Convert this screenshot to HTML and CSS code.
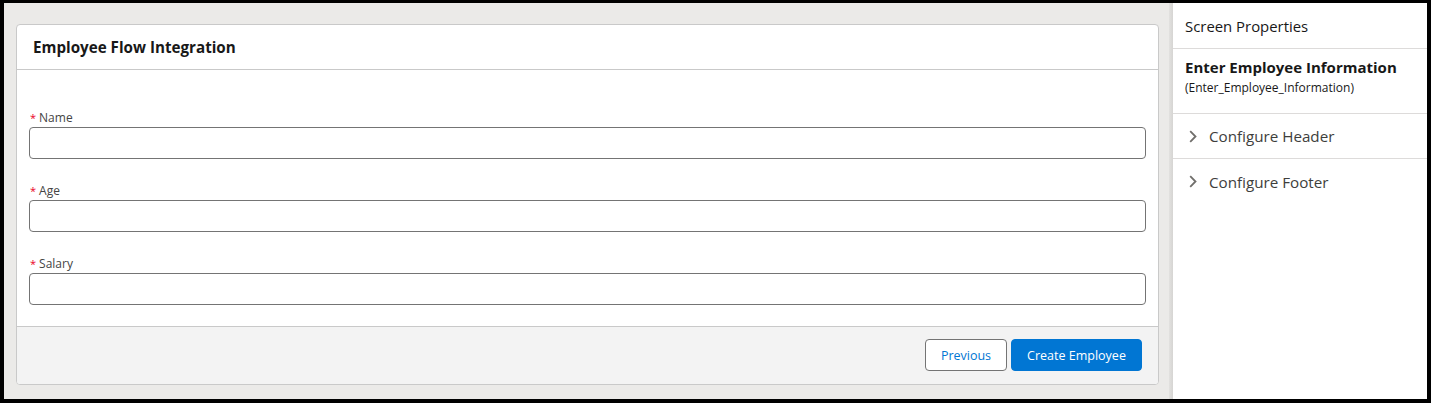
FILE: index.html
```html
<!DOCTYPE html>
<html lang="en">
<head>
    <meta charset="UTF-8">
    <meta name="viewport" content="width=device-width, initial-scale=1.0">
    <title>Flow Builder - Screen</title>
    <link rel="stylesheet" href="styles.css">
</head>
<body>

    <div class="frame">
        <!-- Canvas with the screen preview -->
        <div class="canvas">
            <div class="card">
                <div class="card-header">Employee Flow Integration</div>

                <div class="card-body">
                    <div class="field">
                        <label for="name"><span class="req">*</span>Name</label>
                        <input type="text" id="name">
                    </div>
                    <div class="field">
                        <label for="age"><span class="req">*</span>Age</label>
                        <input type="text" id="age">
                    </div>
                    <div class="field">
                        <label for="salary"><span class="req">*</span>Salary</label>
                        <input type="text" id="salary">
                    </div>
                </div>

                <div class="card-footer">
                    <button class="btn btn-neutral">Previous</button>
                    <button class="btn btn-brand">Create Employee</button>
                </div>
            </div>
        </div>

        <div class="divider"></div>

        <!-- Properties panel -->
        <div class="panel">
            <div class="panel-title">Screen Properties</div>
            <div class="panel-info">
                <div class="info-name">Enter Employee Information</div>
                <div class="info-api">(Enter_Employee_Information)</div>
            </div>
            <div class="panel-row">
                <svg class="chevron" width="8" height="13" viewBox="0 0 8 13">
                    <path d="M1.2 1.2 L6.5 6.5 L1.2 11.8" fill="none" stroke="#706e6b" stroke-width="1.8"/>
                </svg>
                <span>Configure Header</span>
            </div>
            <div class="panel-row">
                <svg class="chevron" width="8" height="13" viewBox="0 0 8 13">
                    <path d="M1.2 1.2 L6.5 6.5 L1.2 11.8" fill="none" stroke="#706e6b" stroke-width="1.8"/>
                </svg>
                <span>Configure Footer</span>
            </div>
        </div>
    </div>

</body>
</html>
```

FILE: styles.css
```css
/* Global Styles */
* {
    box-sizing: border-box;
}

body {
    margin: 0;
    padding: 0;
    background: #fff;
    font-family: "Segoe UI", "Open Sans", "Noto Sans", sans-serif;
    color: #181818;
}

/* Outer frame */
.frame {
    display: flex;
    height: 403px;
    border-style: solid;
    border-color: #000;
    border-width: 3px 4px 4px 4px;
}

/* Canvas */
.canvas {
    flex: 1;
    background: #ebeae8;
    padding: 21px 10px 14px 12px;
}

.divider {
    width: 4px;
    background: linear-gradient(to right, #e2e1df, #d6d5d3);
}

/* Screen card */
.card {
    display: flex;
    flex-direction: column;
    height: 100%;
    background: #fff;
    border: 1px solid #c9c9c9;
    border-radius: 4px;
    overflow: hidden;
}

.card-header {
    height: 45px;
    padding: 0 16px;
    display: flex;
    align-items: center;
    font-size: 15.2px;
    font-weight: bold;
    border-bottom: 1px solid #c9c9c9;
}

.card-body {
    flex: 1;
    min-height: 0;
    padding: 39px 12px 0 12px;
}

.field {
    margin-bottom: 23px;
}

.field:last-child {
    margin-bottom: 0;
}

label {
    display: block;
    font-size: 12px;
    line-height: 18px;
    color: #444;
    padding-left: 1px;
}

.req {
    color: #ea001e;
    font-size: 11px;
    margin-right: 3px;
}

input {
    display: block;
    width: 100%;
    height: 32px;
    border: 1px solid #747474;
    border-radius: 4px;
    font-size: 13px;
}

.card-footer {
    flex-shrink: 0;
    height: 58px;
    background: #f3f3f3;
    border-top: 1px solid #c9c9c9;
    display: flex;
    justify-content: flex-end;
    align-items: flex-start;
    gap: 4px;
    padding: 12px 16px 0 0;
}

/* Buttons */
.btn {
    height: 32px;
    padding: 0;
    border-radius: 4px;
    font-family: inherit;
    font-size: 12.5px;
    white-space: nowrap;
}

.btn-neutral {
    width: 82px;
    background: #fff;
    color: #0176d3;
    border: 1px solid #747474;
}

.btn-brand {
    width: 131px;
    background: #0176d3;
    color: #fff;
    border: 1px solid #0176d3;
}

/* Properties panel */
.panel {
    width: 254px;
    background: #fff;
}

.panel-title {
    height: 46px;
    padding: 0 12px;
    display: flex;
    align-items: center;
    font-size: 14.9px;
    border-bottom: 1px solid #dddbda;
}

.panel-info {
    height: 65px;
    padding: 7px 12px 0 12px;
    border-bottom: 1px solid #dddbda;
}

.info-name {
    font-size: 15px;
    font-weight: bold;
    line-height: 22px;
}

.info-api {
    font-size: 12px;
    line-height: 20px;
    color: #181818;
}

.panel-row {
    height: 45px;
    padding: 0 12px 0 16px;
    display: flex;
    align-items: center;
    gap: 12px;
    font-size: 15.2px;
    color: #3e3e3c;
    border-bottom: 1px solid #dddbda;
}

.panel-row:last-child {
    border-bottom: none;
}
```
